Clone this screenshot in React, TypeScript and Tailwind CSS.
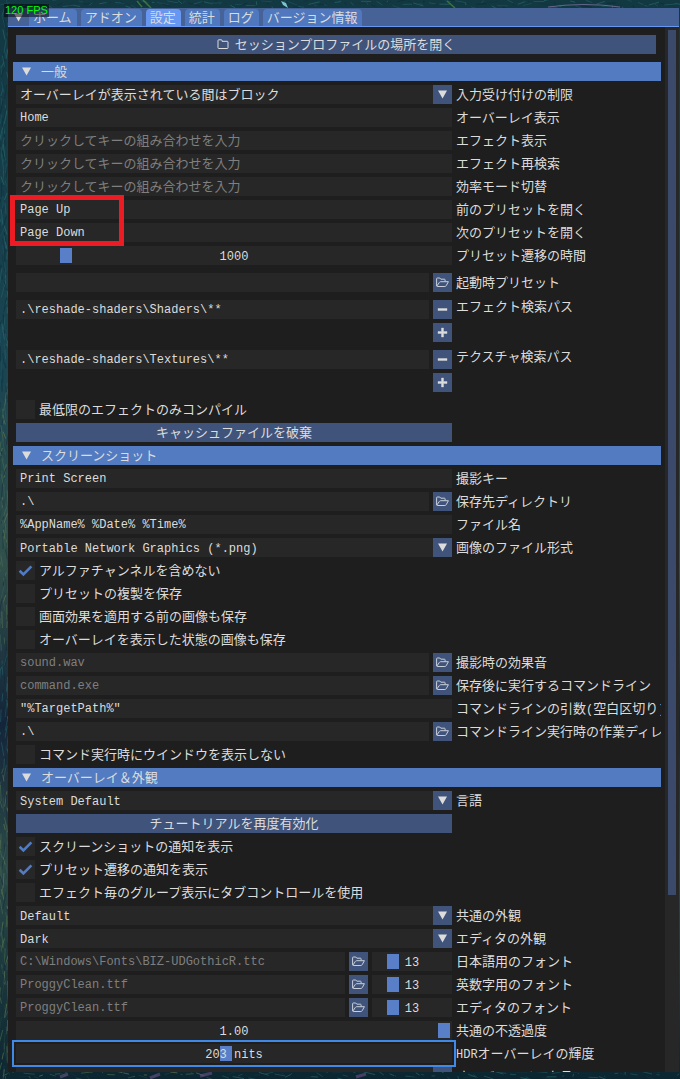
import { useId, useState, type ReactNode } from "react";

const FRAME = "h-[19px] w-full min-w-0 rounded-none border-0 bg-[#272727] px-1 outline-none";
const LATIN = "pt-0.5 font-['Liberation_Mono','Noto_Sans_CJK_JP',monospace] text-[12px] leading-[19px]";
const KANA = "pb-0.5 font-['Noto_Sans_CJK_JP',sans-serif] text-[13px] leading-[17px]";

function TriangleDown() {
  return (
    <svg width="9" height="9" viewBox="0 0 9 9" aria-hidden="true">
      <path d="M0 0.5h9L4.5 8.6z" fill="#dcdcdc" />
    </svg>
  );
}

function FolderClosed() {
  return (
    <svg width="12" height="11" viewBox="0 0 12 11" fill="none" stroke="#dcdcdc" aria-hidden="true">
      <path d="M1 1.5Q1 0.8 1.7 0.8H4.3Q5 0.8 5 1.5V2.3H10.3Q11 2.3 11 3V8.8Q11 9.5 10.3 9.5H1.7Q1 9.5 1 8.8Z" />
    </svg>
  );
}

function FolderOpen() {
  return (
    <svg width="13" height="11" viewBox="0 0 13 11" fill="none" stroke="#c9cfda" strokeLinejoin="round" aria-hidden="true">
      <path d="M0.6 9V1.7Q0.6 1 1.3 1H3.8L4.8 2.2H8.4Q9.1 2.2 9.1 2.9V4.4M0.7 9.3L3.3 5.5Q3.8 4.7 4.6 4.7H12.4L10.2 8.7Q9.7 9.5 8.9 9.5H1.2" />
    </svg>
  );
}

function Sign({ plus }: { plus?: boolean }) {
  return (
    <svg width="11" height="11" viewBox="0 0 11 11" aria-hidden="true">
      <path d={plus ? "M1 4.5h3.5V1h2v3.5H10v2H6.5V10h-2V6.5H1z" : "M1 4.5h9v2H1z"} fill="#dcdcdc" stroke="#dcdcdc" strokeWidth="0.4" />
    </svg>
  );
}

function SquareButton({ name, children }: { name: string; children: ReactNode }) {
  return (
    <button type="button" aria-label={name} className="flex size-[19px] shrink-0 items-center justify-center bg-[#40547b] hover:bg-[#537bc1]">
      {children}
    </button>
  );
}

function Row({ id, label, top, children }: { id: string; label: string; top?: boolean; children: ReactNode }) {
  return (
    <div className="grid grid-cols-[minmax(0,436fr)_minmax(0,209fr)] items-start">
      <div className="flex min-w-0 gap-1">{children}</div>
      <label
        htmlFor={id}
        className={`h-[19px] overflow-x-clip pl-1 whitespace-nowrap font-['Noto_Sans_CJK_JP',sans-serif] text-[13px] ${top ? "leading-[11px]" : "leading-[17px]"}`}
      >
        {label.split(/([ -~]+)/).map((run, i) =>
          i % 2 ? (
            <span key={i} className="font-['Liberation_Mono',monospace] text-[12px]">
              {run}
            </span>
          ) : (
            run
          ),
        )}
      </label>
    </div>
  );
}

function TextRow({ label, value = "", hint, kana, browse }: { label: string; value?: string; hint?: string; kana?: boolean; browse?: boolean }) {
  const id = useId();
  return (
    <Row id={id} label={label}>
      <input id={id} type="text" defaultValue={value} placeholder={hint} className={`${FRAME} ${kana ? KANA : LATIN} placeholder:text-[#7f7f7f]`} />
      {browse && (
        <SquareButton name={`${label}を参照`}>
          <FolderOpen />
        </SquareButton>
      )}
    </Row>
  );
}

function SelectRow({ label, value, kana }: { label: string; value: string; kana?: boolean }) {
  const id = useId();
  return (
    <Row id={id} label={label}>
      <div className="relative w-full">
        <select id={id} className={`${FRAME} ${kana ? KANA : LATIN} block appearance-none`}>
          <option>{value}</option>
        </select>
        <span className="pointer-events-none absolute top-0 right-0 flex size-[19px] items-center justify-center bg-[#40547b]">
          <TriangleDown />
        </span>
      </div>
    </Row>
  );
}

type SliderProps = { id: string; name?: string; min: number; max: number; step: number; start: number; format: (n: number) => string };

function Slider({ id, name, min, max, step, start, format }: SliderProps) {
  const [value, setValue] = useState(start);
  return (
    <div className="relative h-[19px] w-full">
      <input
        id={id}
        aria-label={name}
        type="range"
        min={min}
        max={max}
        step={step}
        value={value}
        onChange={(e) => setValue(Number(e.target.value))}
        className="block h-[19px] w-full appearance-none bg-[#272727] px-0.5 outline-none [&::-webkit-slider-thumb]:h-[15px] [&::-webkit-slider-thumb]:w-[12px] [&::-webkit-slider-thumb]:appearance-none [&::-webkit-slider-thumb]:rounded-none [&::-webkit-slider-thumb]:bg-[#587fc7]"
      />
      <span className={`pointer-events-none absolute inset-0 text-center ${LATIN}`}>{format(value)}</span>
    </div>
  );
}

function SliderRow({ label, focused, ...rest }: Omit<SliderProps, "id"> & { label: string; focused?: boolean }) {
  const id = useId();
  return (
    <Row id={id} label={label}>
      <div className="relative w-full">
        <Slider id={id} {...rest} />
        {focused && <span className="pointer-events-none absolute -inset-x-1 -inset-y-1 border-2 border-[#3f8ae6]" />}
      </div>
    </Row>
  );
}

function FontRow({ label, hint }: { label: string; hint: string }) {
  const id = useId();
  return (
    <Row id={id} label={label}>
      <input id={id} type="text" placeholder={hint} className={`${FRAME} ${LATIN} flex-1 placeholder:text-[#7f7f7f]`} />
      <SquareButton name={`${label}を参照`}>
        <FolderOpen />
      </SquareButton>
      <div className="w-20 shrink-0">
        <Slider id={`${id}-size`} name={`${label}のサイズ`} min={8} max={32} step={1} start={13} format={String} />
      </div>
    </Row>
  );
}

function PathRow({ label, value }: { label: string; value: string }) {
  const id = useId();
  return (
    <div className="flex flex-col gap-1 pb-1">
      <Row id={id} label={label} top>
        <input id={id} type="text" defaultValue={value} className={`${FRAME} ${LATIN}`} />
        <SquareButton name={`${label}を削除`}>
          <Sign />
        </SquareButton>
      </Row>
      <div className="grid grid-cols-[minmax(0,436fr)_minmax(0,209fr)]">
        <div className="flex justify-end">
          <SquareButton name={`${label}を追加`}>
            <Sign plus />
          </SquareButton>
        </div>
      </div>
    </div>
  );
}

function CheckRow({ label, checked }: { label: string; checked?: boolean }) {
  return (
    <label className="flex h-[19px] items-center gap-1 self-start">
      <span className="relative block size-[19px]">
        <input type="checkbox" defaultChecked={checked} className="peer block size-[19px] appearance-none bg-[#272727]" />
        <svg
          viewBox="0 0 19 19"
          className="pointer-events-none absolute inset-0 hidden peer-checked:block"
          fill="none"
          stroke="#537bc1"
          strokeWidth="2.6"
          aria-hidden="true"
        >
          <path d="M3.6 9.8L7.4 13.4L15.4 5.3" />
        </svg>
      </span>
      <span className={KANA}>{label}</span>
    </label>
  );
}

function WideButton({ children }: { children: ReactNode }) {
  return (
    <div className="grid grid-cols-[minmax(0,436fr)_minmax(0,209fr)]">
      <button type="button" className={`h-[19px] bg-[#40547b] hover:bg-[#537bc1] ${KANA}`}>
        {children}
      </button>
    </div>
  );
}

function Section({ title, children }: { title: string; children: ReactNode }) {
  const [open, setOpen] = useState(true);
  return (
    <section className="flex flex-col gap-1">
      <h2 className="-ml-[3px]">
        <button type="button" aria-expanded={open} onClick={() => setOpen(!open)} className="flex h-[19px] w-full items-center gap-2.5 bg-[#537bc1] pl-[9px]">
          <TriangleDown />
          <span className={KANA}>{title}</span>
        </button>
      </h2>
      {open && children}
    </section>
  );
}

const rand = (n: number) => {
  const v = Math.sin(n * 127.1 + 11.7) * 43758.5453;
  return v - Math.floor(v);
};

const SEA = ["#1d5563", "#0d2c38", "#24626a", "#12353f", "#2b6f72"];
const GRASS = ["#4e6f4c", "#22433f", "#6b7d55", "#1a2c3d", "#3b5c56"];

function Scenery() {
  const left = Array.from({ length: 330 }, (_, i) => {
    const y = (i / 330) * 1079;
    const set = (y > 385 && y < 640) || y > 760 ? GRASS : SEA;
    const x = rand(i) * 9;
    return <path key={`l${i}`} d={`M${x} ${y}l${rand(i + 500) * 7 - 3.5} ${5 + rand(i + 900) * 12}`} stroke={set[i % 5]} />;
  });
  const strips = Array.from({ length: 260 }, (_, i) => {
    const x = (i / 260) * 680;
    const bottom = i % 2 === 1;
    const y = bottom ? 1071 + rand(i) * 7 : rand(i) * 7;
    const set = bottom && x < 210 ? GRASS : SEA;
    return <path key={`s${i}`} d={`M${x} ${y}l${rand(i + 300) * 12} ${rand(i + 700) * 7 - 3}`} stroke={set[(i >> 1) % 5]} />;
  });
  return (
    <svg className="absolute inset-0 size-full" viewBox="0 0 680 1079" preserveAspectRatio="none" fill="none" aria-hidden="true">
      <defs>
        <linearGradient id="depth" x1="0" y1="0" x2="0" y2="1">
          <stop offset="0" stopColor="#123842" />
          <stop offset="0.35" stopColor="#1a4552" />
          <stop offset="0.52" stopColor="#31504b" />
          <stop offset="0.67" stopColor="#14243a" />
          <stop offset="0.8" stopColor="#2b4a48" />
          <stop offset="1" stopColor="#0c2631" />
        </linearGradient>
      </defs>
      <path d="M0 0H680V1079H0Z" fill="url(#depth)" />
      <g opacity="0.6">
        {left}
        {strips}
      </g>
      <path d="M137 1L142 7M143 0L151 8M447 1L455 8" stroke="#4b8f36" strokeWidth="1.5" opacity="0.7" />
      <path d="M281 1l5 2 2 5-5-3z" fill="#7cc4cf" />
      <path d="M548 7Q584 2 620 7" stroke="#8779a6" opacity="0.7" />
      <path d="M60 1077l8-3M150 1078l10-4M200 1076l12-3M356 1077l10-3" stroke="#6a5088" strokeWidth="3" opacity="0.6" />
    </svg>
  );
}

const TABS = ["ホーム", "アドオン", "設定", "統計", "ログ", "バージョン情報"];

export default function App() {
  const [tab, setTab] = useState("設定");
  return (
    <div className="relative flex h-screen flex-col overflow-hidden bg-[#123842] pt-2 pr-px pb-[7px] pl-2 text-[#dcdcdc]">
      <Scenery />
      <main className="relative flex min-h-0 flex-1 flex-col bg-[#1e1e1e]">
        <nav className="flex h-[19px] shrink-0 items-end border-b border-[#6797f0] bg-[#466297]">
          <button type="button" aria-label="タブ一覧" className="flex h-[17px] w-[21px] items-center justify-center">
            <TriangleDown />
          </button>
          <div role="tablist" className="flex gap-1">
            {TABS.map((name) => (
              <button
                key={name}
                type="button"
                role="tab"
                aria-selected={name === tab}
                onClick={() => setTab(name)}
                className={`h-[17px] rounded-t pr-[5px] pb-0.5 pl-1 font-['Noto_Sans_CJK_JP',sans-serif] text-[13px] leading-[15px] whitespace-nowrap ${name === tab ? "bg-[#6797f0]" : "bg-[#4f78be]"}`}
              >
                {name}
              </button>
            ))}
          </div>
        </nav>
        <div className="flex min-h-0 flex-1">
          <div className="flex min-w-0 flex-1 flex-col gap-1 overflow-hidden pt-2 pr-1 pl-2 *:shrink-0">
            <button type="button" className="mr-[5px] mb-1 flex h-[19px] items-center justify-center gap-1.5 bg-[#40547b] hover:bg-[#537bc1]">
              <FolderClosed />
              <span className={KANA}>セッションプロファイルの場所を開く</span>
            </button>

            <Section title="一般">
              <SelectRow label="入力受け付けの制限" value="オーバーレイが表示されている間はブロック" kana />
              <TextRow label="オーバーレイ表示" value="Home" />
              <TextRow label="エフェクト表示" hint="クリックしてキーの組み合わせを入力" kana />
              <TextRow label="エフェクト再検索" hint="クリックしてキーの組み合わせを入力" kana />
              <TextRow label="効率モード切替" hint="クリックしてキーの組み合わせを入力" kana />
              <div className="relative flex flex-col gap-1">
                <TextRow label="前のプリセットを開く" value="Page Up" />
                <TextRow label="次のプリセットを開く" value="Page Down" />
                <span className="pointer-events-none absolute -top-[5px] -bottom-1 -left-1.5 w-[114px] border-[5px] border-[#ed1c24]" />
              </div>
              <SliderRow label="プリセット遷移の時間" min={0} max={10000} step={10} start={1000} format={String} />
              <div className="py-1">
                <TextRow label="起動時プリセット" browse />
              </div>
              <PathRow label="エフェクト検索パス" value=".\reshade-shaders\Shaders\**" />
              <PathRow label="テクスチャ検索パス" value=".\reshade-shaders\Textures\**" />
              <CheckRow label="最低限のエフェクトのみコンパイル" />
              <WideButton>キャッシュファイルを破棄</WideButton>
            </Section>

            <Section title="スクリーンショット">
              <TextRow label="撮影キー" value="Print Screen" />
              <TextRow label="保存先ディレクトリ" value=".\" browse />
              <TextRow label="ファイル名" value="%AppName% %Date% %Time%" />
              <SelectRow label="画像のファイル形式" value="Portable Network Graphics (*.png)" />
              <CheckRow label="アルファチャンネルを含めない" checked />
              <CheckRow label="プリセットの複製を保存" />
              <CheckRow label="画面効果を適用する前の画像も保存" />
              <CheckRow label="オーバーレイを表示した状態の画像も保存" />
              <TextRow label="撮影時の効果音" hint="sound.wav" browse />
              <TextRow label="保存後に実行するコマンドライン" hint="command.exe" browse />
              <TextRow label="コマンドラインの引数(空白区切り)" value={'"%TargetPath%"'} />
              <TextRow label="コマンドライン実行時の作業ディレクトリ" value=".\" browse />
              <CheckRow label="コマンド実行時にウインドウを表示しない" />
            </Section>

            <Section title="オーバーレイ＆外観">
              <SelectRow label="言語" value="System Default" />
              <WideButton>チュートリアルを再度有効化</WideButton>
              <CheckRow label="スクリーンショットの通知を表示" checked />
              <CheckRow label="プリセット遷移の通知を表示" checked />
              <CheckRow label="エフェクト毎のグループ表示にタブコントロールを使用" />
              <SelectRow label="共通の外観" value="Default" />
              <SelectRow label="エディタの外観" value="Dark" />
              <FontRow label="日本語用のフォント" hint="C:\Windows\Fonts\BIZ-UDGothicR.ttc" />
              <FontRow label="英数字用のフォント" hint="ProggyClean.ttf" />
              <FontRow label="エディタのフォント" hint="ProggyClean.ttf" />
              <SliderRow label="共通の不透過度" min={0} max={1} step={0.01} start={1} format={(n) => n.toFixed(2)} />
              <SliderRow label="HDRオーバーレイの輝度" min={0} max={422} step={1} start={203} format={(n) => `${n} nits`} focused />
              <SelectRow label="オーバーレイのカラースペース" value="" />
            </Section>
          </div>
          <div className="w-[14px] shrink-0 bg-[#272727] px-[3px] pt-[3px]">
            <div className="h-[83%] w-2 bg-[#3b4a6b]" />
          </div>
        </div>
      </main>
      <div className="absolute top-1 left-1 bg-black/50 px-px font-['Liberation_Sans',sans-serif] text-[11px] leading-[13px] text-[#00ff00]">120 FPS</div>
    </div>
  );
}
